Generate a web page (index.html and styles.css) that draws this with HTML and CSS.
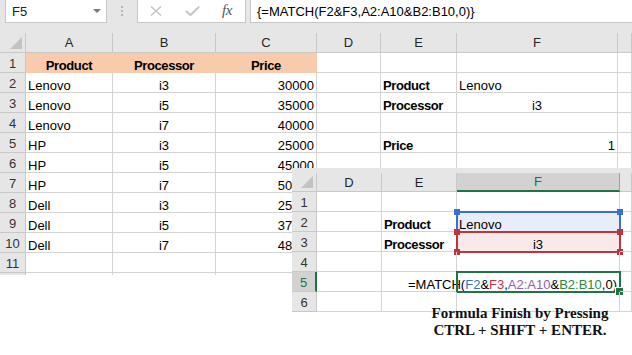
FILE: index.html
```html
<!DOCTYPE html>
<html lang="en">
<head>
  <meta charset="UTF-8" />
  <title>MATCH with two criteria</title>
  <link rel="stylesheet" href="styles.css">
</head>
<body>
  <div class="app">
    <div class="bar">
      <div class="namebox"><span>F5</span><i class="caret"></i></div>
      <div class="grip"><i></i><i></i><i></i></div>
      <div class="buttons">
        <svg class="ic-x" width="12" height="10" viewBox="0 0 12 10"><path d="M1 0.5 L11 9.5 M11 0.5 L1 9.5" /></svg>
        <svg class="ic-ok" width="15" height="10" viewBox="0 0 15 10"><path d="M0.8 5 L5.5 9 L14.2 0.8" /></svg>
        <span class="fx">fx</span>
      </div>
      <div class="formula">{=MATCH(F2&amp;F3,A2:A10&amp;B2:B10,0)}</div>
    </div>

    <div class="sheet main">
      <div class="h corner"></div><div class="h">A</div><div class="h">B</div><div class="h">C</div><div class="h">D</div><div class="h">E</div><div class="h">F</div><div class="h"></div>

      <div class="r">1</div><div class="c pe b ctr">Product</div><div class="c pe b ctr">Processor</div><div class="c pe b ctr">Price</div><div class="c"></div><div class="c"></div><div class="c"></div><div class="c"></div>
      <div class="r">2</div><div class="c">Lenovo</div><div class="c ctr">i3</div><div class="c rt">30000</div><div class="c"></div><div class="c b">Product</div><div class="c">Lenovo</div><div class="c"></div>
      <div class="r">3</div><div class="c">Lenovo</div><div class="c ctr">i5</div><div class="c rt">35000</div><div class="c"></div><div class="c b">Processor</div><div class="c ctr">i3</div><div class="c"></div>
      <div class="r">4</div><div class="c">Lenovo</div><div class="c ctr">i7</div><div class="c rt">40000</div><div class="c"></div><div class="c"></div><div class="c"></div><div class="c"></div>
      <div class="r">5</div><div class="c">HP</div><div class="c ctr">i3</div><div class="c rt">25000</div><div class="c"></div><div class="c b">Price</div><div class="c rt">1</div><div class="c"></div>
      <div class="r">6</div><div class="c">HP</div><div class="c ctr">i5</div><div class="c rt">45000</div><div class="c"></div><div class="c"></div><div class="c"></div><div class="c"></div>
      <div class="r">7</div><div class="c">HP</div><div class="c ctr">i7</div><div class="c rt">50000</div><div class="c"></div><div class="c"></div><div class="c"></div><div class="c"></div>
      <div class="r">8</div><div class="c">Dell</div><div class="c ctr">i3</div><div class="c rt">25000</div><div class="c"></div><div class="c"></div><div class="c"></div><div class="c"></div>
      <div class="r">9</div><div class="c">Dell</div><div class="c ctr">i5</div><div class="c rt">37000</div><div class="c"></div><div class="c"></div><div class="c"></div><div class="c"></div>
      <div class="r">10</div><div class="c">Dell</div><div class="c ctr">i7</div><div class="c rt">48000</div><div class="c"></div><div class="c"></div><div class="c"></div><div class="c"></div>
      <div class="r">11</div><div class="c"></div><div class="c"></div><div class="c"></div><div class="c"></div><div class="c"></div><div class="c"></div><div class="c"></div>
      <div class="r"></div><div class="c"></div><div class="c"></div><div class="c"></div><div class="c"></div><div class="c"></div><div class="c"></div><div class="c"></div>
    </div>

    <!-- second capture: the formula being typed into F5 -->
    <div class="inset">
      <div class="strip"></div>
      <div class="sheet small">
        <div class="h corner"></div><div class="h">D</div><div class="h">E</div><div class="h sel">F</div><div class="h"></div>

        <div class="r">1</div><div class="c"></div><div class="c"></div><div class="c"></div><div class="c"></div>
        <div class="r">2</div><div class="c"></div><div class="c b">Product</div><div class="c blue-fill"><span>Lenovo</span><span class="frame blue"><i></i><i></i><i></i><i></i></span></div><div class="c"></div>
        <div class="r">3</div><div class="c"></div><div class="c b">Processor</div><div class="c ctr red-fill"><span>i3</span><span class="frame red"><i></i><i></i><i></i><i></i></span></div><div class="c"></div>
        <div class="r">4</div><div class="c"></div><div class="c"></div><div class="c"></div><div class="c"></div>
        <div class="r sel-row">5</div><div class="c"></div><div class="c"></div>
        <div class="c rt edit">
          <span>=MATCH(<em class="f-blue">F2</em>&amp;<em class="f-red">F3</em>,<em class="f-purple">A2:A10</em>&amp;<em class="f-green">B2:B10</em>,0)</span>
          <span class="frame active"></span>
        </div>
        <div class="c"></div>
        <div class="r">6</div><div class="c"></div><div class="c"></div><div class="c"></div><div class="c"></div>
      </div>
    </div>

    <p class="note">Formula Finish by Pressing<br>CTRL + SHIFT + ENTER.</p>
  </div>
</body>
</html>
```

FILE: styles.css
```css
* {
  margin: 0;
  padding: 0;
  box-sizing: border-box;
}

html, body {
  width: 632px;
  height: 355px;
  overflow: hidden;
  background: #fff;
  font-family: "Liberation Sans", Arial, sans-serif;
  font-size: 13px;
  color: #000;
}

.app {
  position: relative;
  width: 632px;
  height: 355px;
}

/* formula bar */
.bar {
  display: flex;
  align-items: flex-start;
  height: 33px;
  background: #e6e6e6;
}

.namebox {
  margin-left: 5px;
  width: 102px;
  height: 23px;
  background: #fff;
  border: 1px solid #c6c6c6;
  border-top: 0;
  display: flex;
  align-items: center;
  justify-content: space-between;
  padding: 0 5px 0 6px;
  line-height: 15px;
  color: #222;
}

.caret {
  width: 0;
  height: 0;
  border-left: 4px solid transparent;
  border-right: 4px solid transparent;
  border-top: 4px solid #7a7a7a;
}

.grip {
  width: 30px;
  height: 23px;
  display: flex;
  flex-direction: column;
  align-items: center;
  justify-content: center;
  gap: 2px;
  padding-bottom: 1px;
}

.grip i {
  width: 2px;
  height: 2px;
  background: #b4b4b4;
}

.buttons {
  width: 109px;
  height: 23px;
  background: #fff;
  border: 1px solid #c6c6c6;
  border-top: 0;
  display: flex;
  align-items: center;
}

.buttons svg {
  fill: none;
  stroke: #c4c4c4;
}

.ic-x {
  margin-left: 12px;
  stroke-width: 1.5;
}

.ic-ok {
  margin-left: 23px;
  stroke-width: 2;
}

.fx {
  margin-left: 22px;
  font-family: "Liberation Serif", serif;
  font-style: italic;
  font-size: 15px;
  color: #555;
  letter-spacing: -0.5px;
  padding-bottom: 2px;
}

.formula {
  flex: 1;
  margin-left: 4px;
  height: 23px;
  background: #fff;
  border-left: 1px solid #c6c6c6;
  border-bottom: 1px solid #c6c6c6;
  padding: 4px 0 0 6px;
  line-height: 15px;
  white-space: nowrap;
}

/* grids */
.sheet {
  display: grid;
  grid-auto-rows: 20px;
}

.main {
  grid-template-columns: 26px 87px 103px 101px 64px 76px 161px 14px;
  height: 242px;
  overflow: hidden;
}

.h, .r {
  background: #e6e6e6;
  border-right: 1px solid #c8c8c8;
  border-bottom: 1px solid #c8c8c8;
  display: flex;
  align-items: center;
  justify-content: center;
  line-height: 19px;
  color: #262626;
  position: relative;
}

.r {
  color: #333;
  padding-top: 1px;
}

.corner::after {
  content: "";
  position: absolute;
  right: 3px;
  bottom: 3px;
  width: 12px;
  height: 12px;
  background: #c2c2c2;
  clip-path: polygon(100% 0, 100% 100%, 0 100%);
}

.c {
  border-right: 1px solid #d4d4d4;
  border-bottom: 1px solid #d4d4d4;
  display: flex;
  align-items: flex-end;
  padding: 0 2px;
  line-height: 13px;
  white-space: nowrap;
  position: relative;
}

.b {
  font-weight: bold;
  letter-spacing: -0.4px;
}

.ctr {
  justify-content: center;
}

.rt {
  justify-content: flex-end;
}

.pe {
  background: #f8cbad;
  border-color: #f8cbad;
}

/* inset capture */
.inset {
  position: absolute;
  left: 292px;
  top: 168px;
  width: 340px;
  background: #fff;
}

.strip {
  height: 5px;
  background: #e6e6e6;
}

.small {
  grid-template-columns: 25px 65px 75px 163px 1fr;
  grid-template-rows: 19px;
}

.h.sel {
  background: #d2d2d2;
  color: #217346;
  border-right-color: #9e9e9e;
  border-bottom: 2px solid #217346;
}

.r.sel-row {
  background: #d2d2d2;
  color: #217346;
  border-right: 2px solid #217346;
}

.blue-fill {
  background: #e8eef9;
}

.red-fill {
  background: #fae9e9;
}

.frame {
  position: absolute;
  top: -1px;
  left: -1px;
  right: -2px;
  bottom: -2px;
  border: 2px solid;
}

.frame i {
  position: absolute;
  width: 6px;
  height: 6px;
  background: currentColor;
}

.frame i:nth-child(1) { left: -4px; top: -4px; }
.frame i:nth-child(2) { right: -4px; top: -4px; }
.frame i:nth-child(3) { left: -4px; bottom: -4px; }
.frame i:nth-child(4) { right: -4px; bottom: -4px; }

.blue {
  color: #3b6fce;
  border-color: #3b6fce;
}

.red {
  color: #c0353d;
  border-color: #c0353d;
}

.active {
  border-color: #217346;
}

.active::after {
  content: "";
  position: absolute;
  right: -5px;
  bottom: -5px;
  width: 7px;
  height: 7px;
  background: #217346;
  border: 1px solid #fff;
}

.edit em {
  font-style: normal;
}

.f-blue { color: #3b6fce; }
.f-red { color: #c8323a; }
.f-purple { color: #8a5cc2; }
.f-green { color: #2e8a3c; }

.note {
  position: absolute;
  left: 426px;
  top: 305px;
  width: 188px;
  text-align: center;
  font-family: "Liberation Serif", "Times New Roman", serif;
  font-weight: bold;
  font-size: 15px;
  line-height: 17px;
  color: #111;
}
```
